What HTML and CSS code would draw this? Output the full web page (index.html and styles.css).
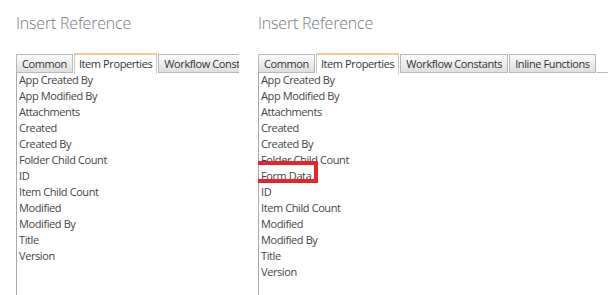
FILE: index.html
```html
<!DOCTYPE html>
<html>
<head>
<meta charset="utf-8">
<link rel="stylesheet" href="styles.css">
</head>
<body>
<div class="page">
  <div class="panel panel-left">
    <h1 class="title">Insert Reference</h1>
    <div class="tabs">
      <div class="tab">Common</div>
      <div class="tab active">Item Properties</div>
      <div class="tab">Workflow Constants</div>
      <div class="tab">Inline Functions</div>
      <div class="tab-rest"></div>
    </div>
    <ul class="list">
      <li>App Created By</li>
      <li>App Modified By</li>
      <li>Attachments</li>
      <li>Created</li>
      <li>Created By</li>
      <li>Folder Child Count</li>
      <li>ID</li>
      <li>Item Child Count</li>
      <li>Modified</li>
      <li>Modified By</li>
      <li>Title</li>
      <li>Version</li>
    </ul>
  </div>
  <div class="panel panel-right">
    <h1 class="title">Insert Reference</h1>
    <div class="tabs">
      <div class="tab">Common</div>
      <div class="tab active">Item Properties</div>
      <div class="tab">Workflow Constants</div>
      <div class="tab">Inline Functions</div>
      <div class="tab-rest"></div>
    </div>
    <ul class="list">
      <li>App Created By</li>
      <li>App Modified By</li>
      <li>Attachments</li>
      <li>Created</li>
      <li>Created By</li>
      <li>Folder Child Count</li>
      <li class="highlight">Form Data</li>
      <li>ID</li>
      <li>Item Child Count</li>
      <li>Modified</li>
      <li>Modified By</li>
      <li>Title</li>
      <li>Version</li>
    </ul>
  </div>
</div>
</body>
</html>
```
FILE: styles.css
```css
html, body {
  margin: 0;
  padding: 0;
  background: #fff;
}
body {
  font-family: "Open Sans", "Noto Sans", sans-serif;
  color: #444;
  width: 608px;
  height: 295px;
  overflow: hidden;
}
.page {
  display: flex;
  padding-left: 16px;
  height: 295px;
}
.panel {
  display: flex;
  flex-direction: column;
  overflow: hidden;
}
.panel-left {
  width: 223px;
  flex: none;
}
.panel-right {
  margin-left: 19px;
  flex: 1;
}
.title {
  margin: 0;
  padding-top: 12px;
  height: 41px;
  box-sizing: border-box;
  font-size: 16px;
  font-weight: 300;
  color: #777;
  letter-spacing: -0.2px;
  line-height: 22px;
  white-space: nowrap;
}
.tabs {
  display: flex;
  align-items: flex-end;
  height: 32px;
  box-sizing: border-box;
  white-space: nowrap;
}
.tab {
  flex: none;
  height: 19px;
  box-sizing: border-box;
  padding: 0 5px 0 5px;
  margin-right: 1px;
  font-size: 11px;
  letter-spacing: -0.4px;
  line-height: 18px;
  color: #333;
  border: 1px solid #b8b8b8;
  background: linear-gradient(#fcfcfc, #dedede);
}
.tab.active {
  height: 21px;
  padding: 0 4px;
  border-color: #c8c8c8;
  border-top: 2px solid #eccf8a;
  border-bottom: none;
  background: #fff;
  line-height: 18px;
  margin-bottom: -1px;
}
.tab-rest {
  flex: 1;
  border-bottom: 1px solid #b8b8b8;
}
.list {
  list-style: none;
  margin: -1px 0 0 0;
  padding: 0 0 0 2px;
  border-left: 1px solid #a8a8a8;
  flex: 1;
}
.list li {
  font-size: 11px;
  letter-spacing: -0.4px;
  line-height: 16px;
  color: #444;
  white-space: nowrap;
}
.highlight {
  position: relative;
}
.highlight::after {
  content: "";
  position: absolute;
  left: -8px;
  top: -7px;
  width: 65px;
  height: 22px;
  box-sizing: border-box;
  border: 4px solid #e8232b;
}
```
